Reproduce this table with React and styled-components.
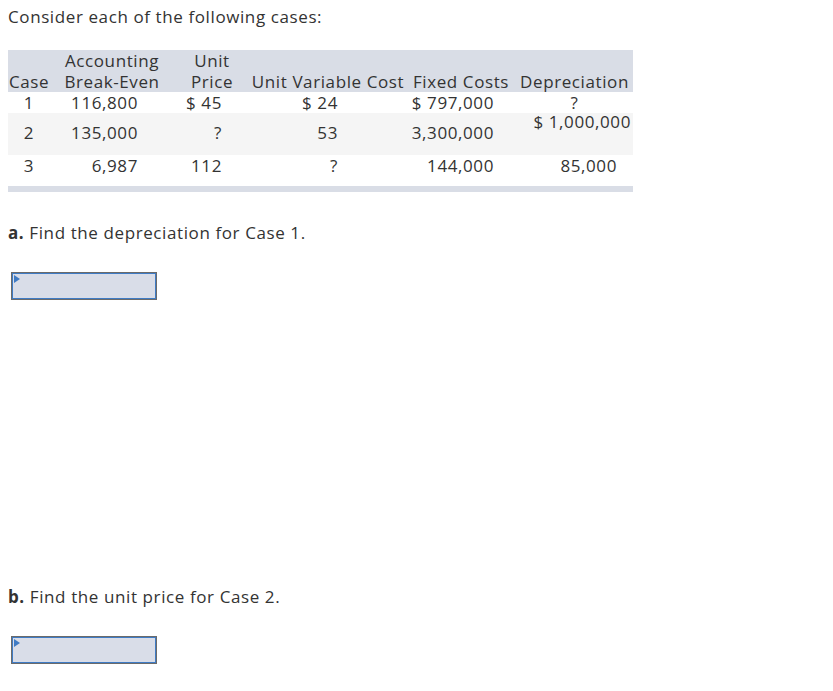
import React from "react";
import styled, { createGlobalStyle } from "styled-components";

const GlobalStyle = createGlobalStyle`
  * {
    box-sizing: border-box;
  }
  body {
    margin: 0;
    background: #ffffff;
    color: #333333;
    font-family: "Open Sans", Lato, sans-serif;
    font-size: 17px;
    letter-spacing: 0.6px;
  }
`;

const Page = styled.div`
  padding: 6px 8px 20px 8px;
`;

const Intro = styled.p`
  margin: 0 0 22px 0;
  line-height: 22px;
`;

const Table = styled.div`
  width: 625px;
`;

const COLS = "42px 124px 76px 156px 110px 117px";

const HeadRow = styled.div`
  display: grid;
  grid-template-columns: ${COLS};
  height: 42px;
  background: #d9dde6;
`;

const HeadCell = styled.div`
  display: flex;
  flex-direction: column;
  justify-content: flex-end;
  align-items: center;
  line-height: 21px;
  white-space: nowrap;
`;

const Row = styled.div`
  display: grid;
  grid-template-columns: ${COLS};
  height: ${(p) => p.h}px;
  padding-bottom: ${(p) => p.pb || 0}px;
  background: ${(p) => (p.shade ? "#f5f5f5" : "#ffffff")};
  align-items: center;
`;

const Cell = styled.div`
  text-align: ${(p) => p.align || "right"};
  padding-right: ${(p) => p.pr || 0}px;
  line-height: ${(p) => (p.top ? 17 : 21)}px;
  white-space: nowrap;
  align-self: ${(p) => (p.top ? "start" : "auto")};
`;

const BottomBar = styled.div`
  height: 6px;
  background: #d9dde6;
`;

const Question = styled.p`
  margin: 30px 0 0 0;
  line-height: 22px;
  b {
    font-weight: 700;
  }
`;

const AnswerBox = styled.div`
  position: relative;
  width: 146px;
  height: 28px;
  margin: 28px 0 0 3px;
  border: 1px solid #6b6b6b;
  background: #3f7bc4;
  padding: 1px;
`;

const AnswerFill = styled.div`
  width: 100%;
  height: 100%;
  background: #d9dde8;
`;

const Marker = styled.span`
  position: absolute;
  left: 2px;
  top: 2px;
  width: 0;
  height: 0;
  border-top: 4px solid transparent;
  border-bottom: 4px solid transparent;
  border-left: 6px solid #3f7bc4;
`;

const Spacer = styled.div`
  height: ${(p) => p.h}px;
`;

const cols = [
  { pr: 0, align: "center" },
  { pr: 36 },
  { pr: 28 },
  { pr: 68 },
  { pr: 22 },
  { pr: 16 },
];

export default function App() {
  return (
    <Page>
      <GlobalStyle />
      <Intro>Consider each of the following cases:</Intro>
      <Table>
        <HeadRow>
          <HeadCell>Case</HeadCell>
          <HeadCell>
            <span>Accounting</span>
            <span>Break-Even</span>
          </HeadCell>
          <HeadCell>
            <span>Unit</span>
            <span>Price</span>
          </HeadCell>
          <HeadCell>Unit Variable Cost</HeadCell>
          <HeadCell>Fixed Costs</HeadCell>
          <HeadCell>Depreciation</HeadCell>
        </HeadRow>
        <Row h={21}>
          <Cell {...cols[0]}>1</Cell>
          <Cell {...cols[1]}>116,800</Cell>
          <Cell {...cols[2]}>$ 45</Cell>
          <Cell {...cols[3]}>$ 24</Cell>
          <Cell {...cols[4]}>$ 797,000</Cell>
          <Cell align="center" pr={0}>?</Cell>
        </Row>
        <Row h={42} pb={3} shade>
          <Cell {...cols[0]}>2</Cell>
          <Cell {...cols[1]}>135,000</Cell>
          <Cell {...cols[2]}>?</Cell>
          <Cell {...cols[3]}>53</Cell>
          <Cell {...cols[4]}>3,300,000</Cell>
          <Cell pr={2} top>$ 1,000,000</Cell>
        </Row>
        <Row h={31} pb={14}>
          <Cell {...cols[0]}>3</Cell>
          <Cell {...cols[1]}>6,987</Cell>
          <Cell {...cols[2]}>112</Cell>
          <Cell {...cols[3]}>?</Cell>
          <Cell {...cols[4]}>144,000</Cell>
          <Cell {...cols[5]}>85,000</Cell>
        </Row>
        <BottomBar />
      </Table>

      <Question>
        <b>a.</b> Find the depreciation for Case 1.
      </Question>
      <AnswerBox>
        <AnswerFill />
        <Marker />
      </AnswerBox>

      <Spacer h={256} />
      <Question>
        <b>b.</b> Find the unit price for Case 2.
      </Question>
      <AnswerBox>
        <AnswerFill />
        <Marker />
      </AnswerBox>
    </Page>
  );
}
